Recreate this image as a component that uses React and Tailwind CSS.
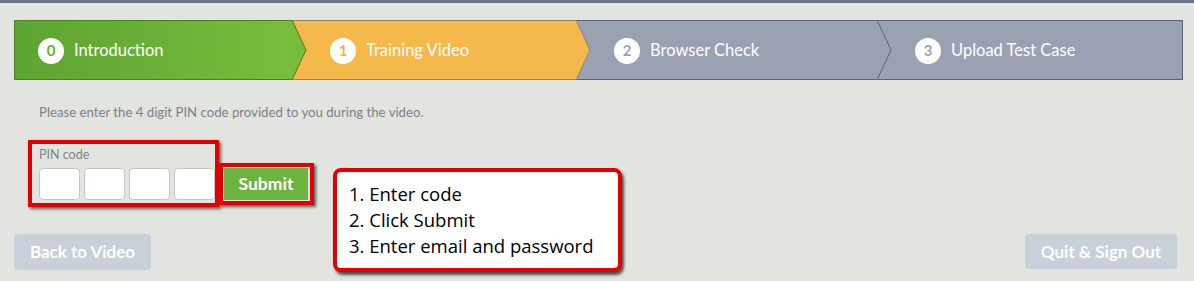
const steps = [
  {
    num: 0,
    label: 'Introduction',
    box: 'w-[278px] pl-[23px] border-l bg-linear-to-r from-[#5da431] to-[#78bd3b] border-[#4a7d24]',
    num_color: 'text-[#68ad36]',
    fill: '#77bc3b',
    stroke: '#4a7d24',
  },
  {
    num: 1,
    label: 'Training Video',
    box: 'w-[284px] pl-[38px] bg-[#f5b94b] border-[#8e8670]',
    num_color: 'text-[#f2b445]',
    fill: '#f5b94b',
    stroke: '#8e8670',
  },
  {
    num: 2,
    label: 'Browser Check',
    box: 'w-[301px] pl-[38px] bg-[#9aa2b2] border-[#5d6472]',
    num_color: 'text-[#9aa2b2]',
    fill: '#9aa2b2',
    stroke: '#5d6472',
  },
  {
    num: 3,
    label: 'Upload Test Case',
    box: 'w-[306px] pl-[38px] border-r bg-[#9aa2b2] border-[#5d6472]',
    num_color: 'text-[#9aa2b2]',
    fill: null,
  },
];

function Step({ step }) {
  return (
    <div className={`relative flex h-[60px] shrink-0 items-center gap-[10px] border-y pt-[1px] ${step.box}`}>
      <span
        className={`flex h-[26px] w-[26px] items-center justify-center rounded-full bg-white text-[15px] font-bold ${step.num_color}`}
      >
        {step.num}
      </span>
      <span className="text-[16.5px] text-white">{step.label}</span>
      {step.fill && (
        <svg className="absolute left-full top-[-1px] z-10 h-[60px] w-[15px]" viewBox="0 0 15 60">
          <polygon points="0,0 14,30 0,60" fill={step.fill} />
          <polyline points="0,0 14,30 0,60" fill="none" stroke={step.stroke} strokeWidth="1" />
        </svg>
      )}
    </div>
  );
}

export default function App() {
  return (
    <div className="relative h-[281px] w-[1194px] overflow-hidden bg-[#e2e4e0] font-['Lato',sans-serif]">
      <div className="h-[3px] bg-[#6b7489]" />

      <div className="ml-[14px] mt-[17px] flex">
        {steps.map((step) => (
          <Step key={step.num} step={step} />
        ))}
      </div>

      <p className="ml-[39px] mt-[22px] text-[13.2px] leading-[20px] text-[#7c8187]">
        Please enter the 4 digit PIN code provided to you during the video.
      </p>

      <div className="ml-[28px] mt-[18px] flex items-start">
        <div className="border-4 border-[#e30000] pl-[7px] pt-[3px] pb-[3px] shadow-[2px_2px_3px_rgba(0,0,0,0.6)]">
          <div className="text-[12.5px] leading-[16px] text-[#80858a]">PIN code</div>
          <div className="mt-[5px] flex gap-[4px]">
            {[0, 1, 2, 3].map((i) => (
              <input
                key={i}
                type="text"
                maxLength={1}
                className="h-[32px] w-[41px] rounded-[4px] border border-[#c4c7c4] bg-white"
              />
            ))}
          </div>
        </div>
        <div className="mt-[23px] border-4 border-[#e30000] p-px pr-[2px] shadow-[2px_2px_3px_rgba(0,0,0,0.6)]">
          <button className="h-[32px] w-[84px] bg-[#6db33f] text-[17.5px] font-bold text-white">
            Submit
          </button>
        </div>
      </div>

      <div className="mt-[27px] flex justify-between pl-[14px] pr-[17px]">
        <button className="h-[36px] w-[137px] rounded-[4px] bg-[#c8d0d9] text-[17px] font-bold text-white">
          Back to Video
        </button>
        <button className="h-[35px] w-[152px] rounded-[4px] bg-[#c8d0d9] text-[17px] font-bold text-white">
          Quit &amp; Sign Out
        </button>
      </div>

      {/* annotation callout */}
      <div className="absolute left-[333px] top-[168px] h-[104px] w-[289px] rounded-[8px] border-4 border-[#e30000] bg-white pl-[12px] pt-[9px] font-['Open_Sans',sans-serif] text-[18.5px] leading-[26px] text-black shadow-[2px_3px_3px_rgba(0,0,0,0.65)]">
        <div>1. Enter code</div>
        <div>2. Click Submit</div>
        <div>3. Enter email and password</div>
      </div>
    </div>
  );
}
